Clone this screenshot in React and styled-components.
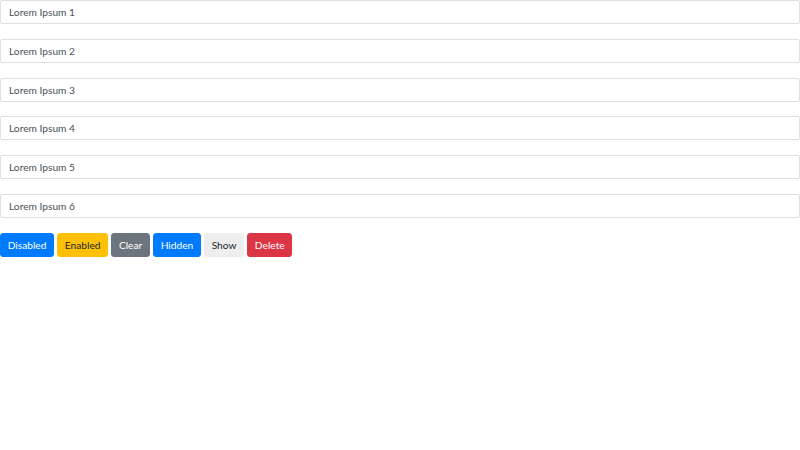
import React from 'react'
import styled, { createGlobalStyle } from 'styled-components'

const GlobalStyle = createGlobalStyle`
  html, body {
    margin: 0;
    padding: 0;
    background: #fff;
  }
  body {
    font-family: Lato, "Open Sans", sans-serif;
    font-size: 10px;
    color: #212529;
  }
`

const Page = styled.div`
  display: flex;
  flex-direction: column;
`

const Field = styled.input`
  display: block;
  box-sizing: border-box;
  width: 100%;
  height: 24px;
  margin: 0 0 14.8px;
  padding: 0 8px;
  font-family: inherit;
  font-size: 10.2px;
  color: #495057;
  background: #fff;
  border: 1px solid #dcdfe3;
  border-radius: 2px;
  outline: none;
`

const Toolbar = styled.div`
  display: flex;
  gap: 3px;
`

const Button = styled.button`
  box-sizing: border-box;
  height: 24px;
  padding: 0 6.7px;
  font-family: inherit;
  font-size: 10.2px;
  font-weight: 400;
  line-height: 1;
  border: 1px solid ${({bg}) => bg};
  border-radius: 3px;
  background: ${({bg}) => bg};
  color: ${({fg}) => fg};
  cursor: pointer;
`

const buttons = [
  {label: 'Disabled', bg: '#007bff', fg: '#fff'},
  {label: 'Enabled', bg: '#ffc107', fg: '#212529'},
  {label: 'Clear', bg: '#6c757d', fg: '#fff'},
  {label: 'Hidden', bg: '#007bff', fg: '#fff'},
  {label: 'Show', bg: '#eeeeee', fg: '#212529'},
  {label: 'Delete', bg: '#dc3545', fg: '#fff'},
]

const App = () => {
  return (
    <Page>
      <GlobalStyle />
      {[1, 2, 3, 4, 5, 6].map(n => (
        <Field key={n} defaultValue={`Lorem Ipsum ${n}`} />
      ))}
      <Toolbar>
        {buttons.map(b => (
          <Button key={b.label} bg={b.bg} fg={b.fg}>{b.label}</Button>
        ))}
      </Toolbar>
    </Page>
  )
}

export default App
